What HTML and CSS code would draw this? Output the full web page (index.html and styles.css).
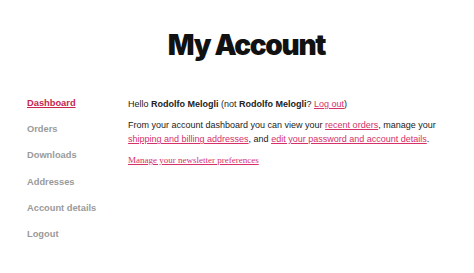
FILE: index.html
```html
<!DOCTYPE html>
<html lang="en">
<head>
    <meta charset="UTF-8">
    <meta name="viewport" content="width=device-width, initial-scale=1.0">
    <title>My Account</title>
    <link rel="stylesheet" href="styles.css">
</head>
<body>
    <div class="page">
        <h1 class="page-title">My Account</h1>
        <div class="account">
            <nav class="account-nav">
                <a href="#" class="nav-link active">Dashboard</a>
                <a href="#" class="nav-link">Orders</a>
                <a href="#" class="nav-link">Downloads</a>
                <a href="#" class="nav-link">Addresses</a>
                <a href="#" class="nav-link">Account details</a>
                <a href="#" class="nav-link">Logout</a>
            </nav>
            <div class="account-content">
                <p>Hello <strong>Rodolfo Melogli</strong> (not <strong>Rodolfo Melogli</strong>? <a href="#">Log out</a>)</p>
                <p>From your account dashboard you can view your <a href="#">recent orders</a>, manage your <a href="#">shipping and billing addresses</a>, and <a href="#">edit your password and account details</a>.</p>
                <p><a href="#" class="newsletter">Manage your newsletter preferences</a></p>
            </div>
        </div>
    </div>
</body>
</html>
```

FILE: styles.css
```css
body {
    margin: 0;
    background-color: #fff;
    font-family: 'Liberation Sans', Arial, sans-serif;
    color: #222;
}
.page {
    padding: 27px 0 0;
}
.page-title {
    margin: 0 0 34px;
    padding-left: 19px;
    text-align: center;
    font-family: 'Inter', sans-serif;
    font-weight: 900;
    font-size: 28px;
    letter-spacing: -1.3px;
    line-height: 36px;
    color: #111;
}
.account {
    display: flex;
    padding-left: 27px;
}
.account-nav {
    width: 101px;
    display: flex;
    flex-direction: column;
    gap: 14.2px;
}
.nav-link {
    font-size: 9.3px;
    font-weight: bold;
    line-height: 12px;
    color: #9a9a9a;
    text-decoration: none;
}
.nav-link.active {
    color: #c7254e;
    text-decoration: underline;
}
.account-content {
    flex: 1;
    padding-right: 20px;
    font-size: 9px;
    line-height: 14px;
}
.account-content p {
    margin: 0 0 7px;
}
.account-content a {
    color: #d6306a;
}
.newsletter {
    font-family: 'Liberation Serif', serif;
    font-size: 9px;
}
```
